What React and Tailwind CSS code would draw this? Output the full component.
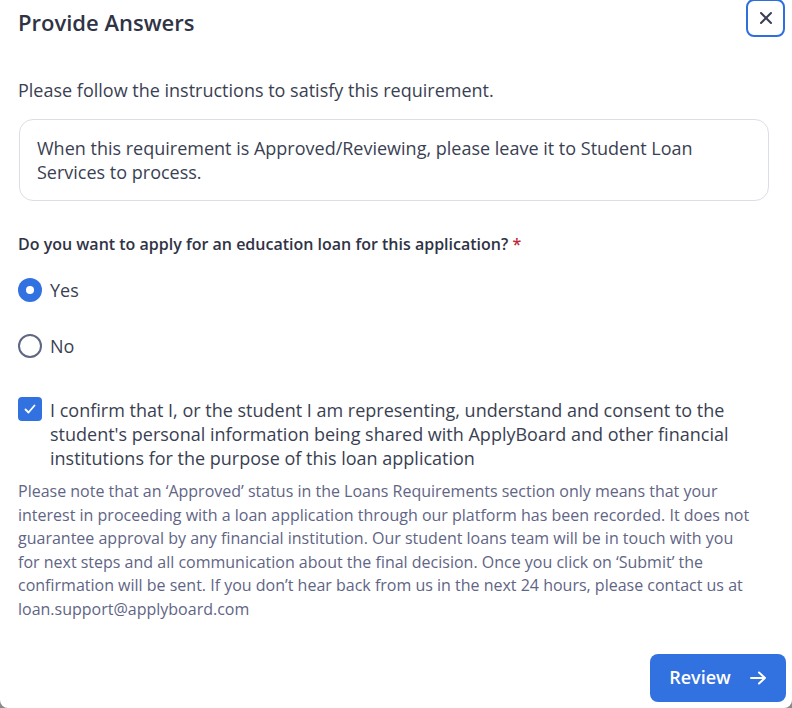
import React from "react";

export default function App() {
  return (
    <div className="w-[792px] h-[708px] bg-[#8a8a8a] overflow-hidden" style={{ fontFamily: '"Open Sans", "Noto Sans", sans-serif' }}>
      <div className="relative w-[792px] h-[708px] bg-white rounded-br-[8px] rounded-bl-[8px] text-[#3a3f53]">
        <div className="flex items-start justify-between pl-[18px] pr-[7px]">
          <h1 className="text-[22px] leading-[30px] font-semibold pt-[7px] text-[#2f3345]">Provide Answers</h1>
          <button className="w-[39px] h-[38px] mt-[-1px] border-2 border-[#2f6fdc] rounded-[8px] flex items-center justify-center">
            <svg width="14" height="14" viewBox="0 0 14 14" fill="none" stroke="#3a3f53" strokeWidth="2" strokeLinecap="round">
              <path d="M2 2L12 12M12 2L2 12" />
            </svg>
          </button>
        </div>

        <p className="pl-[18px] mt-[41px] text-[18px] leading-[24px]">Please follow the instructions to satisfy this requirement.</p>

        <div className="ml-[19px] mr-[23px] mt-[17px] border border-[#dcdde8] rounded-[14px] px-[17px] pt-[16px] pb-[16px] text-[18px] leading-[24px]">
          When this requirement is Approved/Reviewing, please leave it to Student Loan Services to process.
        </div>

        <p className="pl-[18px] mt-[32px] text-[16px] leading-[22px] font-semibold text-[#2f3345]">
          Do you want to apply for an education loan for this application? <span className="text-[#c0283a]">*</span>
        </p>

        <div className="pl-[18px] mt-[23px] flex items-center gap-[8px] h-[24px]">
          <div className="w-[24px] h-[24px] rounded-full bg-[#3272e0] flex items-center justify-center">
            <div className="w-[8px] h-[8px] rounded-full bg-white" />
          </div>
          <span className="text-[18px]">Yes</span>
        </div>

        <div className="pl-[18px] mt-[32px] flex items-center gap-[8px] h-[24px]">
          <div className="w-[24px] h-[24px] rounded-full border-2 border-[#5f6686]" />
          <span className="text-[18px]">No</span>
        </div>

        <div className="pl-[18px] pr-[20px] mt-[40px] flex items-start gap-[8px]">
          <div className="w-[24px] h-[24px] mt-[-1px] shrink-0 rounded-[4px] bg-[#3272e0] flex items-center justify-center">
            <svg width="14" height="14" viewBox="0 0 14 14" fill="none" stroke="white" strokeWidth="1.8" strokeLinecap="round" strokeLinejoin="round">
              <path d="M2.5 7.5L5.5 10.5L11.5 3.5" />
            </svg>
          </div>
          <p className="text-[18px] leading-[24px]">
            I confirm that I, or the student I am representing, understand and consent to the student's personal information being shared with ApplyBoard and other financial institutions for the purpose of this loan application
          </p>
        </div>

        <p className="pl-[18px] pr-[38px] mt-[10px] text-[16px] leading-[23.6px] text-[#5f6585]">
          Please note that an ‘Approved’ status in the Loans Requirements section only means that your interest in proceeding with a loan application through our platform has been recorded. It does not guarantee approval by any financial institution. Our student loans team will be in touch with you for next steps and all communication about the final decision. Once you click on ‘Submit’ the confirmation will be sent. If you don’t hear back from us in the next 24 hours, please contact us at loan.support@applyboard.com
        </p>

        <div className="flex justify-end pr-[6px] mt-[32px]">
          <button className="w-[136px] h-[48px] rounded-[8px] bg-[#3272e0] text-white text-[18px] font-semibold flex items-center justify-center gap-[18px]">
            <span>Review</span>
            <svg width="18" height="14" viewBox="0 0 18 14" fill="none" stroke="white" strokeWidth="2" strokeLinecap="round" strokeLinejoin="round">
              <path d="M2 7H16M10 1.5L16 7L10 12.5" />
            </svg>
          </button>
        </div>
      </div>
    </div>
  );
}
